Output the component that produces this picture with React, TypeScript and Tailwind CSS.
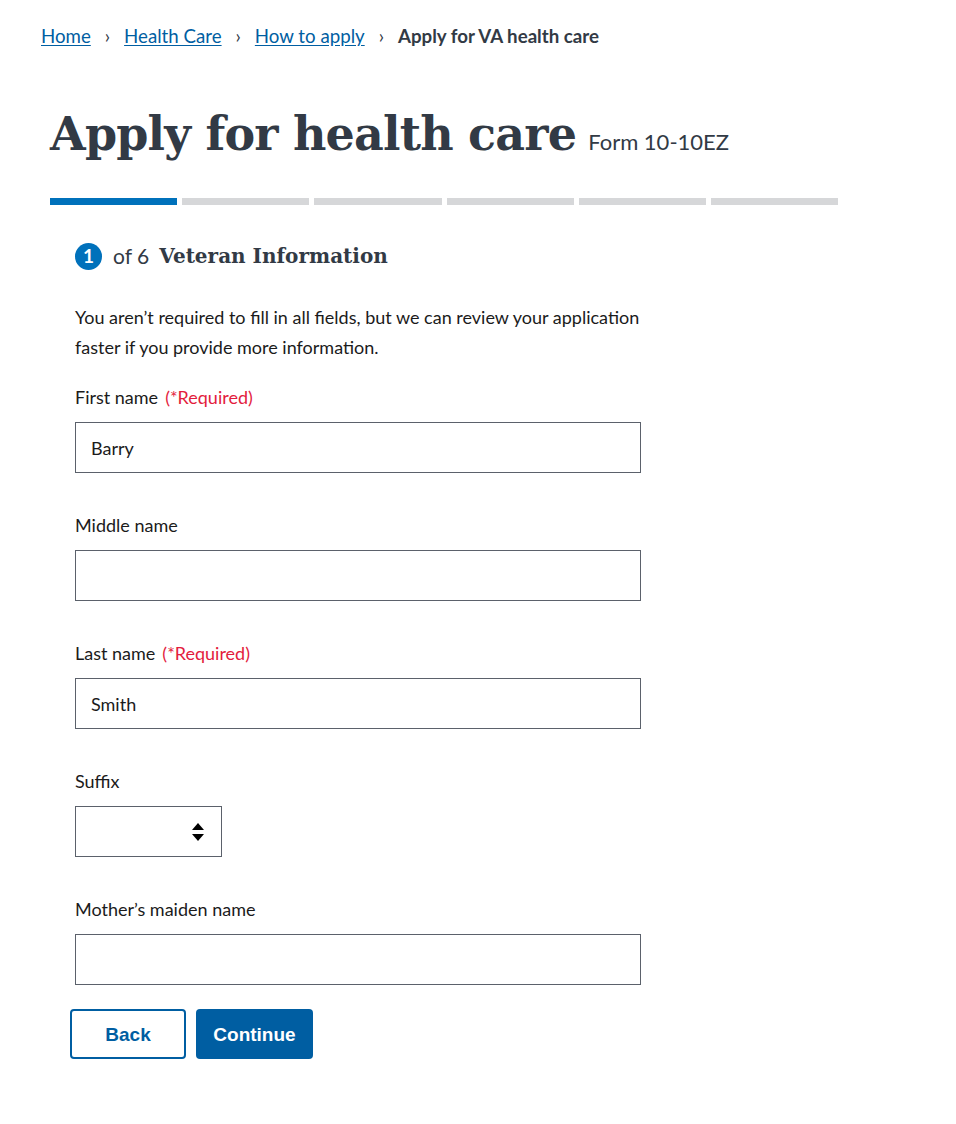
import React from "react"

const sans = "font-['Lato','Liberation_Sans',sans-serif]"
const serif = "font-['DejaVu_Serif','Liberation_Serif',serif]"

function Label({ text, required }: { text: string; required?: boolean }) {
    return (
        <div className="h-[24px] leading-[24px] text-[18px] text-[#1b1b1b] flex gap-[7px]">
            <span>{text}</span>
            {required && <span className="text-[#e31c3d]">(*Required)</span>}
        </div>
    )
}

function TextField({ label, value, required }: { label: string; value?: string; required?: boolean }) {
    return (
        <div className="flex flex-col">
            <Label text={label} required={required} />
            <input
                type="text"
                defaultValue={value}
                className="mt-[13px] w-[566px] h-[51px] border border-[#5b616b] px-[15px] text-[18px] text-[#1b1b1b] outline-none bg-white"
            />
        </div>
    )
}

export default function App() {
    const steps = [true, false, false, false, false, false]

    return (
        <div className={`${sans} bg-white min-h-[1124px] w-[956px] text-[#323a45]`}>
            {/* breadcrumb */}
            <nav className="pt-[24px] pl-[41px] flex items-center h-[48px] text-[18.7px] leading-[24px]">
                <a href="#" className="text-[#005ea2] underline underline-offset-2">Home</a>
                <span className="mx-[14px] text-[#323a45]">›</span>
                <a href="#" className="text-[#005ea2] underline underline-offset-2">Health Care</a>
                <span className="mx-[14px] text-[#323a45]">›</span>
                <a href="#" className="text-[#005ea2] underline underline-offset-2">How to apply</a>
                <span className="mx-[14px] text-[#323a45]">›</span>
                <span className="font-bold text-[#323a45]">Apply for VA health care</span>
            </nav>

            <div className="pl-[50px]">
                <h1 className="mt-[56px] flex items-baseline h-[60px]">
                    <span className={`${serif} font-bold text-[46px] leading-[60px] text-[#323a45] tracking-[-0.8px]`}>Apply for health care</span>
                    <span className="ml-[12px] text-[22px] text-[#323a45]">Form 10-10EZ</span>
                </h1>

                <div className="mt-[34px] flex gap-[5px] w-[788px]">
                    {steps.map((active, i) => (
                        <div key={i} className={`flex-1 h-[7px] ${active ? "bg-[#0071bb]" : "bg-[#d6d7d9]"}`} />
                    ))}
                </div>
            </div>

            <div className="pl-[75px]">
                <div className="mt-[36px] flex items-center h-[30px]">
                    <span className="w-[27px] h-[27px] rounded-full bg-[#0071bb] text-white font-bold text-[19px] flex items-center justify-center">1</span>
                    <span className="ml-[11px] text-[21px] text-[#323a45]">of 6</span>
                    <span className={`${serif} ml-[10px] font-bold text-[20px] text-[#323a45]`}>Veteran Information</span>
                </div>

                <p className="mt-[31px] w-[600px] text-[18px] leading-[30px] text-[#1b1b1b]">
                    You aren’t required to fill in all fields, but we can review your application faster if you provide more information.
                </p>

                <div className="mt-[23px] flex flex-col gap-[40px]">
                    <TextField label="First name" value="Barry" required />
                    <TextField label="Middle name" />
                    <TextField label="Last name" value="Smith" required />
                    <div className="flex flex-col">
                        <Label text="Suffix" />
                        <div className="mt-[13px] relative w-[147px] h-[51px] border border-[#5b616b] bg-white">
                            <svg className="absolute right-[16px] top-[16px]" width="14" height="18" viewBox="0 0 14 18">
                                <path d="M7 0 L13 7 L1 7 Z" fill="#000" />
                                <path d="M7 18 L13 11 L1 11 Z" fill="#000" />
                            </svg>
                        </div>
                    </div>
                    <TextField label="Mother’s maiden name" />
                </div>

                <div className="mt-[24px] -ml-[5px] flex gap-[10px] font-['Liberation_Sans',Arial,sans-serif]">
                    <button className="w-[116px] h-[50px] pt-[3px] rounded-[4px] border-2 border-[#005ea2] text-[#005ea2] font-bold text-[19px] bg-white">Back</button>
                    <button className="w-[117px] h-[50px] pt-[3px] rounded-[4px] bg-[#005ea2] text-white font-bold text-[19px]">Continue</button>
                </div>
            </div>
        </div>
    )
}
